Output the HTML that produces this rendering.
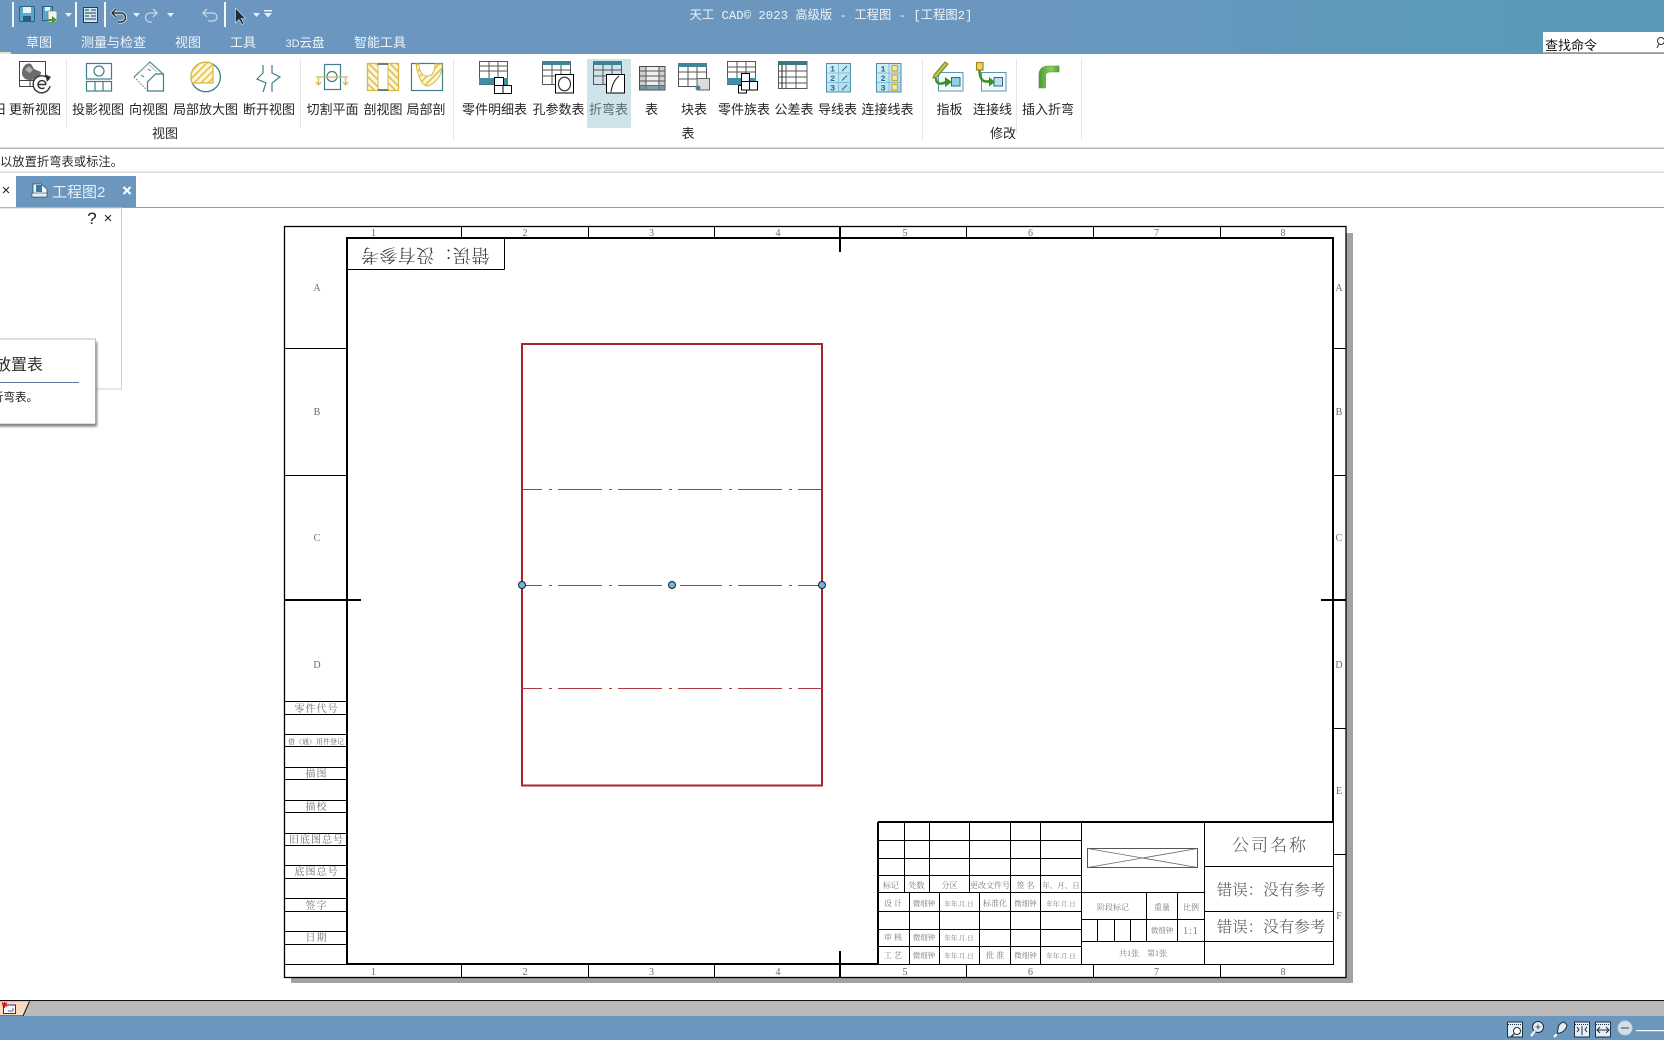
<!DOCTYPE html>
<html lang="zh">
<head>
<meta charset="utf-8">
<title>天工 CAD 2023 高级版 - 工程图</title>
<style>
html,body{margin:0;padding:0;width:1664px;height:1040px;overflow:hidden;background:#fff}
svg{display:block}
text{font-family:"Liberation Sans","WenQuanYi Zen Hei","Noto Sans CJK SC",sans-serif}
.r{font-size:13px;fill:#262626;text-anchor:middle}
.t{font-size:13px;fill:#eef4f8;text-anchor:middle}
.d{fill:#6a6a6a;text-anchor:middle}
.d text{font-family:"Liberation Serif","Noto Serif CJK SC",serif}
.z{font-size:10px}
.l{font-size:10px;letter-spacing:1px}
.c{font-family:"Liberation Serif","Noto Serif CJK SC",serif;font-weight:300;fill:#444;text-anchor:middle}
.k{stroke:#000;stroke-width:1;fill:none;shape-rendering:crispEdges}
.k2{stroke:#000;stroke-width:2;fill:none;shape-rendering:crispEdges}
.te{stroke:#3f7f88;stroke-width:1.2;fill:none}
.gr{stroke:#555;stroke-width:1;fill:none}
</style>
</head>
<body>
<svg width="1664" height="1040" viewBox="0 0 1664 1040" xmlns="http://www.w3.org/2000/svg">
<defs>
<linearGradient id="hdr" x1="0" y1="0" x2="1" y2="0">
<stop offset="0" stop-color="#6b96bf"/><stop offset=".6" stop-color="#6b97bf"/><stop offset=".92" stop-color="#5a9ab8"/><stop offset="1" stop-color="#5a9ab8"/>
</linearGradient>
<pattern id="hy" width="5" height="5" patternUnits="userSpaceOnUse" patternTransform="rotate(45)"><rect width="5" height="5" fill="#fdf6d8"/><rect width="1.6" height="5" fill="#e3c14a"/></pattern>
<pattern id="hy2" width="5" height="5" patternUnits="userSpaceOnUse" patternTransform="rotate(-45)"><rect width="5" height="5" fill="#fdf6d8"/><rect width="1.6" height="5" fill="#d8bf62"/></pattern>
<linearGradient id="gp" x1="0" y1="0" x2="1" y2="0"><stop offset="0" stop-color="#4f9a2e"/><stop offset=".6" stop-color="#8fcf5c"/><stop offset="1" stop-color="#5aa336"/></linearGradient>
<linearGradient id="lb" x1="0" y1="0" x2="1" y2="1"><stop offset="0" stop-color="#d8f0f8"/><stop offset="1" stop-color="#a8dcec"/></linearGradient>
<filter id="sh" x="-10%" y="-10%" width="120%" height="120%"><feGaussianBlur stdDeviation="1.300"/></filter>
</defs>

<!-- Title bar -->
<rect x="0" y="0" width="1664" height="54" fill="url(#hdr)"/>
<rect x="0" y="52" width="11" height="2" fill="#e8e6c8"/>
<rect x="0" y="54" width="1664" height="94" fill="#fff"/>

<!-- quick access separators -->
<g fill="#f0f5f9">
<rect x="12" y="2" width="2" height="25"/><rect x="75" y="2" width="2" height="25"/><rect x="104" y="2" width="2" height="25"/><rect x="224" y="2" width="2" height="25"/>
</g>
<!-- save -->
<rect x="19.500" y="6.500" width="15" height="15" rx="1.500" fill="#58a8cf" stroke="#2f5f80"/>
<rect x="23" y="7" width="8" height="6" fill="#e7f5fb"/><rect x="23" y="16" width="8" height="5" fill="#2a5d80"/>
<!-- save as -->
<rect x="42.500" y="6.500" width="10" height="14" fill="#58a8cf" stroke="#2f5f80"/>
<rect x="45" y="7" width="5" height="4" fill="#e7f5fb"/>
<rect x="48" y="11" width="9" height="11" fill="#f2f2f2" stroke="#777" stroke-width=".7"/>
<path d="M47 19h5v-3l5 4-5 3v-2h-5z" fill="#3f9a34"/>
<path d="M65 13h7l-3.500 4z" fill="#e8eff6"/>
<!-- doc -->
<rect x="83.500" y="7.500" width="14" height="15" fill="#cfe8f2" stroke="#1f3d55"/>
<path d="M85 10h4M85 13h11M85 16h4M85 19h11M91 10h5M91 16h5" stroke="#1f3d55" stroke-width="1"/>
<!-- undo -->
<path d="M116 9l-4 4 4 4M112 13h9a4.500 4.500 0 0 1 0 9h-3" fill="none" stroke="#dfe8f0" stroke-width="3"/>
<path d="M116 9l-4 4 4 4M112 13h9a4.500 4.500 0 0 1 0 9h-3" fill="none" stroke="#25343f" stroke-width="1.500"/>
<path d="M133 13h7l-3.500 4z" fill="#e8eff6"/>
<path d="M153 9l4 4-4 4M157 13h-7a4 4 0 0 0 0 9h2" fill="none" stroke="#c5d6e5" stroke-width="1.300"/>
<path d="M167 13h7l-3.500 4z" fill="#e8eff6"/>
<path d="M207 9l-4 4 4 4M203 13h10a3.500 3.500 0 0 1 0 8h-5" fill="none" stroke="#c5d6e5" stroke-width="1.300"/>
<path d="M235.500 8l0 15 3.500-3.500 3 5 2-1-3-5h4.500z" fill="#1d2c38" stroke="#dce7f0" stroke-width=".6"/>
<path d="M253 13h7l-3.500 4z" fill="#e8eff6"/>
<path d="M264 10h8v1.500h-8zM264 13h8l-4 4.500z" fill="#e8eff6"/>

<text x="831" y="19" fill="#eef4f8" text-anchor="middle" style="font-family:'Liberation Mono','WenQuanYi Zen Hei',monospace;font-size:12.300px">天工 CAD© 2023 高级版 - 工程图 - [工程图2]</text>

<!-- ribbon tabs -->
<text class="t" x="39" y="47">草图</text>
<text class="t" x="113.500" y="47">测量与检查</text>
<text class="t" x="188" y="47">视图</text>
<text class="t" x="243" y="47">工具</text>
<text class="t" x="305" y="47"><tspan style="font-size:11px">3D</tspan><tspan style="font-size:12.500px">云盘</tspan></text>
<text class="t" x="380" y="47">智能工具</text>

<!-- search -->
<rect x="1543" y="32" width="121" height="21" fill="#fff"/>
<rect x="1543" y="52" width="121" height="1.500" fill="#aaa"/>
<text x="1545" y="50" font-size="13" fill="#111">查找命令</text>
<circle cx="1661" cy="41" r="3.500" fill="none" stroke="#333"/><path d="M1659 44l-2 4" stroke="#333"/>

<!-- ribbon separators -->
<g fill="#e3e6e8">
<rect x="66" y="59" width="1" height="69"/><rect x="300" y="59" width="1" height="69"/><rect x="453" y="59" width="1" height="81"/><rect x="922" y="59" width="1" height="81"/><rect x="1016" y="59" width="1" height="75"/><rect x="1081" y="59" width="1" height="81"/>
</g>
<rect x="587" y="59" width="44" height="69" fill="#cfe3ea"/>

<!-- ribbon labels -->
<text class="r" x="0" y="114">日</text>
<text class="r" x="35" y="114">更新视图</text>
<text class="r" x="98" y="114">投影视图</text>
<text class="r" x="148.500" y="114">向视图</text>
<text class="r" x="205.500" y="114">局部放大图</text>
<text class="r" x="269" y="114">断开视图</text>
<text class="r" x="332.500" y="114">切割平面</text>
<text class="r" x="383" y="114">剖视图</text>
<text class="r" x="426" y="114">局部剖</text>
<text class="r" x="494.500" y="114">零件明细表</text>
<text class="r" x="558.500" y="114">孔参数表</text>
<text class="r" x="608.500" y="114" style="fill:#5a6a70">折弯表</text>
<text class="r" x="651.500" y="114">表</text>
<text class="r" x="694" y="114">块表</text>
<text class="r" x="744" y="114">零件族表</text>
<text class="r" x="794" y="114">公差表</text>
<text class="r" x="837.500" y="114">导线表</text>
<text class="r" x="887.500" y="114">连接线表</text>
<text class="r" x="949.500" y="114">指板</text>
<text class="r" x="992.500" y="114">连接线</text>
<text class="r" x="1048" y="114">插入折弯</text>
<text class="r" x="165" y="138">视图</text>
<text class="r" x="688" y="138">表</text>
<text class="r" x="1003" y="138">修改</text>

<!-- update view icon -->
<rect x="19.500" y="61.500" width="26" height="25" fill="#fff" stroke="#444"/>
<path d="M20 80.500h19M30 80.500v6" stroke="#444"/>
<path d="M22 73c0-7 5-11 9-9l3 5 7 3c0 5-5 8-11 8-5 0-8-3-8-7z" fill="#6b6b6b"/>
<path d="M25 70l4-4 4 4-3 3z" fill="#b0b0b0"/>
<circle cx="42" cy="84.500" r="8.500" fill="#fff"/>
<path d="M49 80a8.500 8.500 0 1 0 1 6M46 84.500a4 4 0 1 0-1.500 3.200M38 84.500h8" fill="none" stroke="#333" stroke-width="1.400"/>
<path d="M45 74l6 3-4 5z" fill="#333"/>
<!-- projection -->
<rect class="te" x="86.500" y="63.500" width="25" height="15.500"/>
<circle class="te" cx="99" cy="71" r="5"/>
<rect class="te" x="86.500" y="81.500" width="25" height="9.500"/>
<path class="te" d="M95 81.500v9.500M103 81.500v9.500"/>
<!-- auxiliary view -->
<path d="M134 77l16-15 13 12" fill="none" stroke="#5c8b92" stroke-width="1.200"/>
<path d="M134 77l13 13" fill="none" stroke="#3f7f88" stroke-dasharray="1.500 1.500"/>
<path d="M139 72l9-8 9 8" fill="none" stroke="#9cb8bc" stroke-width=".8"/>
<path d="M141 75l3 2M148 69l3 2" stroke="#3f7f88"/>
<path class="te" d="M147.500 91v-9l8-8h8v17z"/>
<!-- detail -->
<circle cx="205.700" cy="77" r="14.700" fill="#fff" stroke="#3f7f88" stroke-width="1.300"/>
<path d="M213 64.200A14.700 14.700 0 0 0 192.300 83H213Z" fill="url(#hy)" stroke="#d9b63c" stroke-width="1.200"/>
<!-- break view -->
<path d="M263 65v8l-6 6 9 4-3 9M272 65v8l8 4-8 6v9" fill="none" stroke="#3f7f88" stroke-width="1.200"/>
<!-- section plane -->
<rect class="te" x="324.500" y="64.500" width="16" height="25" fill="#ecf7fa"/>
<circle class="te" cx="332" cy="76.500" r="5"/>
<path d="M316 77h32M318.500 77v7M345.500 77v7M316 82l2.500 3 2.500-3M343 82l2.500 3 2.500-3" fill="none" stroke="#d4b95a" stroke-width="1.300"/>
<!-- section view -->
<rect x="367.500" y="63.500" width="31" height="27" fill="url(#hy2)" stroke="#d8bb3e" stroke-width="1.300"/>
<rect x="378" y="63" width="10" height="28" fill="#fff"/>
<path d="M378 63v28M388 63v28" stroke="#d8bb3e"/>
<path d="M378 64h10M378 90h10" stroke="#32566b" stroke-width="1.500"/>
<!-- broken section -->
<rect class="te" x="411.500" y="63.500" width="31" height="27" fill="#fff"/>
<path d="M416 64c2 16 8 22 11 22s14-6 15-18v-4h-7c0 8-3 12-8 12s-8-5-8-12z" fill="url(#hy)" stroke="#d8bb3e"/>
<!-- BOM table -->
<g>
<rect class="gr" x="479.500" y="61.500" width="28" height="23" fill="#f1eded"/>
<path class="gr" d="M479.500 66h28M479.500 71h28M489 61.500v23M498 61.500v23"/>
<rect x="479" y="78" width="29" height="6.500" fill="#3d8ea6"/>
<rect x="494.500" y="77.500" width="9" height="8.500" fill="#fff" stroke="#000"/>
<rect x="494.500" y="85.500" width="8.500" height="8" fill="#fff" stroke="#000"/>
<rect x="503" y="85.500" width="8.500" height="8" fill="#fff" stroke="#000"/>
</g>
<!-- hole table -->
<g>
<rect class="gr" x="542.500" y="61.500" width="28" height="23" fill="#f2f2f2"/>
<rect x="542" y="61" width="29" height="4" fill="#3f8396"/>
<path class="gr" d="M542.500 70h28M542.500 76h28M552 65v19M561 65v19"/>
<rect x="555.500" y="74.500" width="18" height="18.500" fill="#fff" stroke="#000"/>
<ellipse cx="564.500" cy="84" rx="6" ry="6.800" fill="#fff" stroke="#333" stroke-width="1.200"/>
</g>
<!-- bend table -->
<g>
<rect class="gr" x="593.500" y="61.500" width="28" height="23" fill="#e8eef0"/>
<rect x="593" y="61" width="29" height="4" fill="#3f8396"/>
<path class="gr" d="M593.500 70h28M593.500 76h28M603 65v19M612 65v19"/>
<rect x="606.500" y="74.500" width="18" height="18.500" fill="#fff" stroke="#000"/>
<path d="M611 92c1-7 3-12 8-16" fill="none" stroke="#222" stroke-width="1.100"/>
</g>
<!-- table -->
<g>
<rect x="639.500" y="66.500" width="25.500" height="23.500" fill="#cfcfcf" stroke="#4a4a4a"/>
<rect x="646" y="67" width="13" height="22" fill="#efefef"/>
<path class="gr" d="M639.500 71h25.500M639.500 76h25.500M639.500 81h25.500M639.500 85.500h25.500M646 66.500v23.500M659 66.500v23.500"/>
<rect x="640" y="85" width="25" height="5" fill="#4f7f90" opacity=".7"/>
</g>
<!-- block table -->
<g>
<rect class="gr" x="678.500" y="63.500" width="28" height="23" fill="#f3f3f3"/>
<rect x="678" y="63" width="29" height="4" fill="#3f8396"/>
<path class="gr" d="M678.500 72h28M678.500 79h28M688 67v19M697 67v19"/>
<rect x="697" y="78.500" width="12.500" height="11.500" fill="#dcdcdc" stroke="#666"/>
<circle cx="698" cy="88" r="2.500" fill="#4f8196"/>
</g>
<!-- family table -->
<g>
<rect class="gr" x="727.500" y="61.500" width="28" height="23" fill="#f1eded"/>
<path class="gr" d="M727.500 67h28M727.500 72h28M737 61.500v23M746 61.500v23"/>
<rect x="727" y="78" width="29" height="6.500" fill="#3d8ea6"/>
<rect x="738.500" y="85.500" width="8" height="7.500" fill="#fff" stroke="#000"/>
<rect x="741.500" y="73.500" width="8" height="8" fill="#fff" stroke="#000"/>
<rect x="741.500" y="81.500" width="8" height="8.500" fill="#fff" stroke="#000"/>
<rect x="749.500" y="81.500" width="8" height="8.500" fill="#fff" stroke="#000"/>
</g>
<!-- tolerance table -->
<g>
<rect class="gr" x="778.500" y="61.500" width="28.500" height="27" fill="#f0f0f0"/>
<rect x="778" y="61" width="29" height="4" fill="#3f7585"/>
<path class="gr" d="M778.500 71h28.500M778.500 77h28.500M778.500 83h28.500M786 65v23M796 65v23"/>
<path d="M782 65v23" stroke="#222"/>
</g>
<!-- leader table -->
<g>
<rect x="826.500" y="63.500" width="24" height="28.500" fill="url(#lb)" stroke="#4e8ea8"/>
<path d="M838.500 64v28M827 73h24M827 82.500h24" stroke="#6cb3c9" stroke-width=".7"/>
<g style="font-weight:bold" font-size="8.500" fill="#2c6a8a" text-anchor="middle">
<text x="832.500" y="71.500" style="font-family:'Liberation Mono',monospace">1</text><text x="832.500" y="81" style="font-family:'Liberation Mono',monospace">2</text><text x="832.500" y="90.500" style="font-family:'Liberation Mono',monospace">3</text>
</g>
<path d="M842 71l5-5M842 80.500l5-5M842 90l5-5" stroke="#2c6a8a"/>
</g>
<!-- connection table -->
<g>
<rect x="876.500" y="63.500" width="24.500" height="28.500" fill="url(#lb)" stroke="#4e8ea8"/>
<path d="M889 64v28M877 73h24M877 82.500h24" stroke="#6cb3c9" stroke-width=".7"/>
<g style="font-weight:bold" font-size="8.500" fill="#2c6a8a" text-anchor="middle">
<text x="883" y="71.500" style="font-family:'Liberation Mono',monospace">1</text><text x="883" y="81" style="font-family:'Liberation Mono',monospace">2</text><text x="883" y="90.500" style="font-family:'Liberation Mono',monospace">3</text>
</g>
<rect x="892" y="65.500" width="5.500" height="5.500" fill="#f6e9a8" stroke="#cda92c" stroke-width="1.200"/>
<rect x="892" y="75" width="5.500" height="5.500" fill="#f6e9a8" stroke="#cda92c" stroke-width="1.200"/>
<rect x="892" y="84.500" width="5.500" height="5.500" fill="#f6e9a8" stroke="#cda92c" stroke-width="1.200"/>
</g>
<!-- guide plate -->
<rect x="938.500" y="72.500" width="24.500" height="18.500" fill="#f4fbfd" stroke="#5b95aa"/>
<rect x="951.500" y="77.500" width="8.500" height="8.500" fill="#8fd0e6" stroke="#2c6a8a"/>
<path d="M934 75l11-13 3 2-11 13-4 1z" fill="#b5c94a" stroke="#7d7a2a"/>
<path d="M936 78c0 6 4 7 10 4" fill="none" stroke="#3d8f2a" stroke-width="2.500"/>
<path d="M945 77l7 5-7 5z" fill="#3d8f2a"/>
<!-- connection line -->
<rect x="981.500" y="72.500" width="24.500" height="18.500" fill="#f4fbfd" stroke="#5b95aa"/>
<rect x="994" y="77.500" width="8.500" height="8.500" fill="#b8e2ef" stroke="#2c6a8a"/>
<rect x="976.500" y="62.500" width="6.500" height="7.500" fill="#f0d468" stroke="#a97f1a" stroke-width="1.200"/>
<path d="M979.500 70c0 10 4 13 11 11" fill="none" stroke="#3d8f2a" stroke-width="2.500"/>
<path d="M989 77l6 5-6 4.500z" fill="#3d8f2a"/>
<!-- insert bend -->
<path d="M1039 88V75c0-6 4-9 9-9h11v6h-9c-3 0-4.500 1.500-4.500 4v12z" fill="url(#gp)" stroke="#4a8f2a" stroke-width=".6"/>

<!-- command bar -->
<rect x="0" y="147.500" width="1664" height="1.500" fill="#b5b5b5"/>
<text x="0" y="166" font-size="12.300" fill="#2a2a2a">以放置折弯表或标注。</text>
<rect x="0" y="171.500" width="1664" height="1.500" fill="#d8d8d8"/>

<!-- doc tabs -->
<text x="6" y="195" font-size="15" fill="#222" text-anchor="middle">×</text>
<rect x="16" y="176" width="120" height="31" fill="#6b97bf"/>
<rect x="0" y="207" width="1664" height="1" fill="#8b9eae"/>
<path d="M33 197v-13h8l6 5v8z" fill="#f0f5f8" stroke="#24506e" stroke-width=".8"/>
<rect x="36" y="185" width="6" height="7" fill="#3b78a3"/>
<rect x="32" y="193" width="15" height="4" fill="#e8eef2" stroke="#24506e" stroke-width=".6"/>
<text x="52" y="197" font-size="15" fill="#e8f0f6">工程图2</text>
<path d="M123.500 187l7 7M130.500 187l-7 7" stroke="#fff" stroke-width="2"/>

<!-- left panel -->
<rect x="-2" y="208" width="123.500" height="181" fill="#fff" stroke="#c8d0d6"/>
<text x="92" y="224" font-size="17" fill="#222" text-anchor="middle">?</text>
<text x="108" y="223" font-size="15" fill="#222" text-anchor="middle">×</text>

<!-- popup -->
<rect x="-4" y="342" width="101" height="84.500" fill="#777" filter="url(#sh)"/>
<rect x="-2" y="339" width="97.500" height="85" fill="#fff" stroke="#9aa0a6" stroke-width=".7"/>
<text x="43" y="370" font-size="16" fill="#333" text-anchor="end">放置表</text>
<rect x="0" y="382" width="79" height="1" fill="#5c7a99"/>
<text x="38" y="401" font-size="11.500" fill="#222" text-anchor="end">折弯表。</text>

<!-- drawing sheet -->
<rect x="1346" y="233" width="7" height="750" fill="#a2a2a2"/>
<rect x="291" y="978" width="1062" height="5" fill="#a2a2a2"/>
<rect x="284.500" y="226.500" width="1061.500" height="751" fill="#fff" stroke="#000" stroke-width="1.300"/>
<rect class="k2" x="347" y="238" width="986" height="726"/>

<!-- zones top/bottom -->
<path class="k" d="M461.500 226v12M588.500 226v12M714.500 226v12M966.500 226v12M1093.500 226v12M1220.500 226v12M461.500 964v14M588.500 964v14M714.500 964v14M966.500 964v14M1093.500 964v14M1220.500 964v14"/>
<path class="k" d="M285 348.500h62M285 475.500h62M1333 348.500h13M1333 475.500h13M1333 728.500h13M1333 854.500h13"/>
<path class="k2" d="M840 226v26M840 951v27M285 600h76M1321 600h25"/>

<g class="d z">
<text x="373.500" y="236">1</text><text x="525" y="236">2</text><text x="651.500" y="236">3</text><text x="778" y="236">4</text><text x="905" y="236">5</text><text x="1030.500" y="236">6</text><text x="1156.500" y="236">7</text><text x="1283" y="236">8</text>
<text x="373.500" y="975">1</text><text x="525" y="975">2</text><text x="651.500" y="975">3</text><text x="778" y="975">4</text><text x="905" y="975">5</text><text x="1030.500" y="975">6</text><text x="1156.500" y="975">7</text><text x="1283" y="975">8</text>
<text x="317" y="291">A</text><text x="317" y="415">B</text><text x="317" y="541">C</text><text x="317" y="668">D</text>
<text x="1339" y="291">A</text><text x="1339" y="415">B</text><text x="1339" y="541">C</text><text x="1339" y="668">D</text><text x="1339" y="794">E</text><text x="1339" y="919">F</text>
</g>

<!-- mirrored title -->
<path class="k" d="M504.500 238v31.500M347 269.500h157.500"/>
<text class="c" transform="rotate(180 425 255)" x="425" y="261" font-size="18" style="letter-spacing:.4px;fill:#333">错误：没有参考</text>

<!-- left column -->
<path class="k" d="M285 701.500h62M285 714.500h62M285 734.500h62M285 746.500h62M285 767.500h62M285 779.500h62M285 800.500h62M285 812.500h62M285 833.500h62M285 845.500h62M285 865.500h62M285 878.500h62M285 898.500h62M285 911.500h62M285 931.500h62M285 944.500h62M285 964.500h62"/>
<g class="d l">
<text x="316.500" y="712">零件代号</text>
<text x="316" y="744" style="font-size:7px;letter-spacing:0">借（通）用件登记</text>
<text x="316.500" y="777">描图</text>
<text x="316.500" y="810">描校</text>
<text x="316.500" y="843">旧底图总号</text>
<text x="316.500" y="875">底图总号</text>
<text x="316.500" y="909">签字</text>
<text x="316.500" y="941">日期</text>
</g>

<!-- Red part -->
<rect x="522" y="344" width="300" height="441.500" fill="none" stroke="#a8272c" stroke-width="2"/>
<g fill="none" stroke="#b03a40" stroke-width="1.100">
<path stroke-dasharray="44 7 3 6" stroke-dashoffset="24" d="M522 489.500h300"/>
<path stroke-dasharray="44 7 3 6" stroke-dashoffset="24" d="M522 585.500h300"/>
<path stroke-dasharray="44 7 3 6" stroke-dashoffset="24" d="M522 688.500h300"/>
</g>
<rect x="664" y="582" width="16" height="7" fill="#fff"/>
<g fill="#6db6d8" stroke="#123" stroke-width="1">
<circle cx="522" cy="585" r="3.500"/><circle cx="672" cy="585" r="3.500"/><circle cx="822" cy="585" r="3.500"/>
</g>

<!-- Title block -->
<rect x="878" y="822" width="455" height="142" fill="#fff"/>
<path class="k2" d="M878 822h455M878 822v142"/>
<path class="k" d="M878 840.500h203M878 858.500h203M878 875.500h203M878 892.500h326M878 911.500h203M878 929.500h203M878 946.500h203"/>
<path class="k" d="M904.500 822v70M929.500 822v70M969.500 822v70M1010.500 822v142M1040.500 822v142M1081.500 822v142M909.500 892v72M939.500 892v72M979.500 892v72"/>
<path class="k" d="M1204.500 822v142M1081 919.500h123M1081 941.500h252M1204 866.500h129M1204 911.500h129M1146.500 892v49M1177.500 892v49M1097.500 919v22M1114.500 919v22M1130.500 919v22"/>
<rect x="1087.500" y="848.500" width="110" height="19" fill="none" stroke="#555"/>
<path d="M1087.500 848.500l110 19M1197.500 848.500l-110 19" stroke="#666" stroke-width=".8"/>

<g class="d" font-size="8" style="fill:#7a7a7a">
<text x="891" y="888">标记</text><text x="916.500" y="888">处数</text><text x="949.500" y="888">分区</text><text x="990" y="888">更改文件号</text><text x="1025.500" y="888">签 名</text><text x="1061" y="888" style="font-size:7.500px">年、月、日</text>
<text x="893" y="906">设 计</text><text x="924" y="906" style="font-size:7.500px">微细钟</text><text x="959" y="906" style="font-size:6.500px">年年.月.日</text><text x="995" y="906">标准化</text><text x="1025.500" y="906" style="font-size:7.500px">微细钟</text><text x="1061" y="906" style="font-size:6.500px">年年.月.日</text>
<text x="893" y="940">审 核</text><text x="924" y="940" style="font-size:7.500px">微细钟</text><text x="959" y="940" style="font-size:6.500px">年年.月.日</text>
<text x="893" y="958">工 艺</text><text x="924" y="958" style="font-size:7.500px">微细钟</text><text x="959" y="958" style="font-size:6.500px">年年.月.日</text><text x="995" y="958">批 准</text><text x="1025.500" y="958" style="font-size:7.500px">微细钟</text><text x="1061" y="958" style="font-size:6.500px">年年.月.日</text>
<text x="1113" y="910">阶段标记</text><text x="1162" y="910">重量</text><text x="1191" y="910">比例</text>
<text x="1162" y="933" style="font-size:7.500px">微细钟</text><text x="1191" y="934" style="font-size:10px;letter-spacing:1px">1:1</text>
<text x="1143" y="956">共1张　第1张</text>
</g>
<text class="c" x="1270" y="851" font-size="17" style="letter-spacing:2px;fill:#555">公司名称</text>
<text class="c" x="1271" y="895" font-size="15.500" style="fill:#555">错误：没有参考</text>
<text class="c" x="1271" y="932" font-size="15.500" style="fill:#555">错误：没有参考</text>

<!-- bottom -->
<rect x="0" y="1000" width="1664" height="1.200" fill="#111"/>
<rect x="0" y="1001.200" width="1664" height="14.800" fill="#bababa"/>
<path d="M0 1001.500H29.500L23 1016H0z" fill="#f9d9bf"/>
<path d="M29.500 1001.500L23 1016H0" fill="none" stroke="#111"/>
<rect x="3.500" y="1005" width="12" height="8.500" fill="#f8f8ff" stroke="#223377"/>
<path d="M8 1011h5v-3" fill="none" stroke="#223377" stroke-width=".7"/>
<path d="M2 1005l5-2M4.500 1002v6M2 1002.500l5 4" stroke="#e01818" stroke-width="1.300"/>
<rect x="0" y="1016" width="1664" height="24" fill="#6b97bf"/>

<!-- status icons -->
<g fill="#e8eff5" stroke="#1e2f40">
<rect x="1507.500" y="1022" width="15" height="15"/>
<path d="M1508 1024.500h14" stroke-dasharray="1 1" fill="none"/>
<circle cx="1517" cy="1031" r="3.500" fill="#fff"/>
<path d="M1514 1034l-3 3" stroke-width="1.300"/>
<circle cx="1538" cy="1027" r="5.500" fill="#e5eef5"/>
<path d="M1535 1031l-4 5" stroke="#fff" stroke-width="2"/>
<path d="M1535.500 1027h5M1538 1024.500v5" stroke-width=".8" fill="none"/>
<path d="M1564 1022l3 3c-1 5-5 8-8 8l-2 1 1-5c0-4 2-6 6-7z" fill="#e5eef5"/>
<path d="M1557 1034l-3 3" stroke="#fff" stroke-width="2"/>
<rect x="1574.500" y="1022" width="15" height="15"/>
<path d="M1575 1024.500h14" stroke-dasharray="1 1" fill="none"/>
<path d="M1577 1027l2 2.500-2 2.500M1587 1027l-2 2.500 2 2.500M1582 1026v9" fill="none"/>
<rect x="1595.500" y="1022" width="15" height="15"/>
<path d="M1596 1024.500h14" stroke-dasharray="1 1" fill="none"/>
<path d="M1600 1027l-3 3 3 3M1606 1027l3 3-3 3M1597 1030h12" fill="none"/>
</g>
<circle cx="1625" cy="1028" r="7" fill="#d5dee6" stroke="#b8d0e2"/>
<path d="M1621 1028h8" stroke="#6a7a8a" stroke-width="1.500"/>
<rect x="1636" y="1030" width="28" height="1.200" fill="#fff"/>
</svg>
</body>
</html>
